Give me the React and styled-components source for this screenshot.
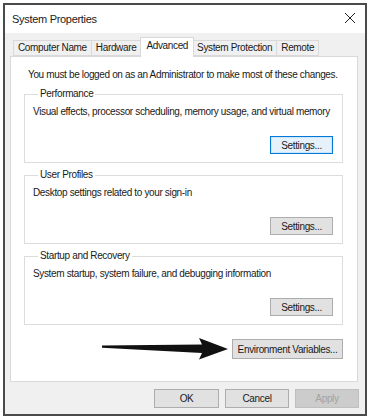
import React from 'react'
import styled, { createGlobalStyle } from 'styled-components'

const Global = createGlobalStyle`
    html, body {
        margin: 0;
        padding: 0;
        background: #ffffff;
    }
    body {
        font-family: "Liberation Sans", Arial, sans-serif;
        font-size: 10px;
        letter-spacing: -0.35px;
        color: #1a1a1a;
    }
`

const Window = styled.div`
    box-sizing: border-box;
    margin: 3px 0 0 3px;
    width: 364px;
    height: 413px;
    border: 2px solid #4a4a4a;
    background: #f0f0f0;
    display: flex;
    flex-direction: column;
`

const TitleBar = styled.div`
    height: 28px;
    background: #ffffff;
    display: flex;
    align-items: center;
    justify-content: space-between;
    padding: 0 9px 0 7px;
`

const Title = styled.span`
    font-size: 11px;
    letter-spacing: -0.3px;
    color: #1a1a1a;
`

const CloseButton = styled.button`
    border: 0;
    background: transparent;
    padding: 0;
    width: 12px;
    height: 12px;
    display: flex;
    margin-top: -2px;
`

const Body = styled.div`
    padding: 0 6px 0 5px;
    display: flex;
    flex-direction: column;
`

const TabStrip = styled.div`
    display: flex;
    align-items: flex-end;
    height: 23px;
    padding-left: 3px;
    position: relative;
    z-index: 1;
`

const Tab = styled.div`
    box-sizing: border-box;
    height: ${p => (p.$active ? '20px' : '16px')};
    margin-bottom: ${p => (p.$active ? '-1px' : '0')};
    padding: ${p => (p.$active ? '0 5px' : '0 4px')};
    margin-left: ${p => (p.$active ? '-1px' : '0')};
    margin-right: ${p => (p.$active ? '-1px' : '0')};
    border: 1px solid #d9d9d9;
    border-bottom: ${p => (p.$active ? '0' : '1px solid #d9d9d9')};
    border-left: ${p => (p.$first || p.$active ? '1px solid #d9d9d9' : '0')};
    background: ${p => (p.$active ? '#ffffff' : '#f0f0f0')};
    display: flex;
    align-items: center;
    line-height: 12px;
    padding-bottom: ${p => (p.$active ? '3px' : '0')};
    white-space: nowrap;
    position: relative;
    z-index: ${p => (p.$active ? 2 : 1)};
`

const Panel = styled.div`
    box-sizing: border-box;
    width: 348px;
    height: 326px;
    background: #ffffff;
    border: 1px solid #d9d9d9;
    padding: 12px 14px 0 13px;
    display: flex;
    flex-direction: column;
`

const Notice = styled.p`
    margin: 0 0 7px 4px;
    line-height: 12px;
    white-space: nowrap;
`

const Group = styled.fieldset`
    margin: 0 0 6px 0;
    padding: 0 9px 8px 8px;
    border: 1px solid #dcdcdc;
    display: flex;
    flex-direction: column;
    min-width: 0;
`

const Legend = styled.legend`
    padding: 0 2px;
    margin-left: 5px;
    line-height: 12px;
`

const Description = styled.div`
    margin-top: 6px;
    line-height: 12px;
    white-space: nowrap;
`

const ButtonRow = styled.div`
    display: flex;
    justify-content: flex-end;
    align-items: center;
    gap: ${p => p.$gap || '0'};
    margin-top: ${p => p.$top || '0'};
`

const Button = styled.button`
    box-sizing: border-box;
    font-family: inherit;
    font-size: 10px;
    letter-spacing: inherit;
    white-space: nowrap;
    height: ${p => p.$height || '18px'};
    width: ${p => p.$width || '63px'};
    padding: 0;
    color: ${p => (p.disabled ? '#a3a3a3' : '#1a1a1a')};
    background: ${p => (p.$focused ? '#e5f1fb' : p.disabled ? '#cccccc' : '#e1e1e1')};
    border: 1px solid ${p => (p.$focused ? '#0078d7' : p.disabled ? '#bfbfbf' : '#adadad')};
    ${p => p.$focused && 'box-shadow: inset 0 0 0 1px #cde5f7;'}
`

const Footer = styled.div`
    display: flex;
    justify-content: flex-end;
    gap: 6px;
    padding: 7px 0 0 0;
`

function Arrow() {
    return (
        <svg width="128" height="22" viewBox="0 0 128 22">
            <path d="M1 7.5 L101 6.5 L98 0 L127 11 L98 21.5 L101 15 L1 9.8 Z" fill="#111" />
        </svg>
    )
}

function SettingsGroup({ title, text, focused }) {
    return (
        <Group>
            <Legend>{title}</Legend>
            <Description>{text}</Description>
            <ButtonRow $top="18px">
                <Button $focused={focused}>Settings...</Button>
            </ButtonRow>
        </Group>
    )
}

export default function App() {
    const tabs = ['Computer Name', 'Hardware', 'Advanced', 'System Protection', 'Remote']
    return (
        <>
            <Global />
            <Window>
                <TitleBar>
                    <Title>System Properties</Title>
                    <CloseButton aria-label="Close">
                        <svg width="12" height="12" viewBox="0 0 12 12">
                            <path d="M1 1 L11 11 M11 1 L1 11" stroke="#222" strokeWidth="1" />
                        </svg>
                    </CloseButton>
                </TitleBar>
                <Body>
                    <TabStrip>
                        {tabs.map((t, i) => (
                            <Tab key={t} $first={i === 0} $active={t === 'Advanced'}>{t}</Tab>
                        ))}
                    </TabStrip>
                    <Panel>
                        <Notice>You must be logged on as an Administrator to make most of these changes.</Notice>
                        <SettingsGroup
                            title="Performance"
                            text="Visual effects, processor scheduling, memory usage, and virtual memory"
                            focused
                        />
                        <SettingsGroup title="User Profiles" text="Desktop settings related to your sign-in" />
                        <SettingsGroup
                            title="Startup and Recovery"
                            text="System startup, system failure, and debugging information"
                        />
                        <ButtonRow $top="7px" $gap="3px">
                            <Arrow />
                            <Button $width="111px" $height="20px">Environment Variables...</Button>
                        </ButtonRow>
                    </Panel>
                    <Footer>
                        <Button $width="65px" $height="19px">OK</Button>
                        <Button $width="64px" $height="19px">Cancel</Button>
                        <Button $width="64px" $height="19px" disabled>Apply</Button>
                    </Footer>
                </Body>
            </Window>
        </>
    )
}
